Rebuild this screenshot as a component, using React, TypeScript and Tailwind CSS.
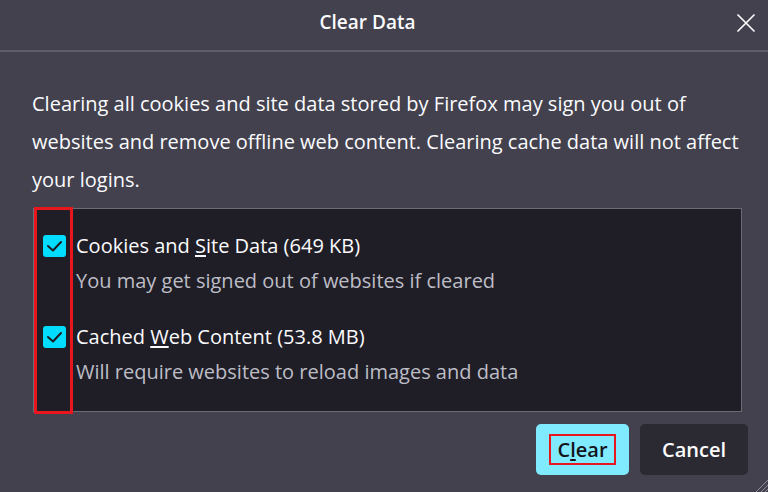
import React from "react";

function Check() {
  return (
    <div className="w-[23px] h-[22px] rounded-[3px] bg-[#00ddff] flex items-center justify-center shrink-0">
      <svg width="23" height="22" viewBox="0 0 23 22">
        <path d="M5 11 L10 15.5 L18 7" fill="none" stroke="#1c1b22" strokeWidth="2" strokeLinecap="round" strokeLinejoin="round" />
      </svg>
    </div>
  );
}

export default function App() {
  return (
    <div
      className="relative w-[768px] h-[492px] bg-[#42414d] overflow-hidden text-[#fbfbfe] flex flex-col"
      style={{ fontFamily: '"Open Sans", "Noto Sans", sans-serif' }}
    >
      <div className="h-[50px] flex items-start">
        <div className="w-[735px] pt-[9px] text-center text-[19px] leading-[26px] font-semibold">Clear Data</div>
        <button className="ml-[2px] mt-[14px] w-[18px] h-[18px]" aria-label="Close">
          <svg width="18" height="18" viewBox="0 0 18 18">
            <path d="M1 1 L17 17 M17 1 L1 17" stroke="#fbfbfe" strokeWidth="1.7" strokeLinecap="round" />
          </svg>
        </button>
      </div>
      <div className="h-[2px] bg-[#5e5d69]" />
      <p className="mt-[33px] ml-[32px] text-[20px] leading-[38px] whitespace-nowrap">
        Clearing all cookies and site data stored by Firefox may sign you out of
        <br />
        websites and remove offline web content. Clearing cache data will not affect
        <br />
        your logins.
      </p>
      <div className="relative mt-[9px] ml-[33px] w-[709px] h-[204px] border border-[#6b6a75] bg-[#1f1e26] pt-[26px] pl-[9px] flex flex-col gap-[34px]">
        <div className="flex gap-[10px]">
          <Check />
          <div className="flex flex-col gap-[13px]">
            <div className="text-[20px] leading-[22px]">
              Cookies and <span className="underline underline-offset-2">S</span>ite Data (649 KB)
            </div>
            <div className="text-[20px] leading-[22px] text-[#bdbdc6]">You may get signed out of websites if cleared</div>
          </div>
        </div>
        <div className="flex gap-[10px]">
          <Check />
          <div className="flex flex-col gap-[13px]">
            <div className="text-[20px] leading-[22px]">
              Cached <span className="underline underline-offset-2">W</span>eb Content (53.8 MB)
            </div>
            <div className="text-[20px] leading-[22px] text-[#bdbdc6]">Will require websites to reload images and data</div>
          </div>
        </div>
        <div className="absolute left-[0px] top-[-2px] w-[39px] h-[207px] border-[3px] border-[#e8161d]" />
      </div>
      <div className="mt-[12px] mr-[20px] flex justify-end gap-[11px]">
        <button className="relative w-[93px] h-[51px] rounded-[5px] bg-[#80ebff] text-[#15141a] text-[20px] font-semibold flex items-center justify-center">
          <span className="px-[6px] h-[31px] leading-[27px] border-2 border-[#e8161d]">
            C<span className="underline underline-offset-2">l</span>ear
          </span>
        </button>
        <button className="w-[108px] h-[51px] rounded-[5px] bg-[#2b2a33] text-[#fbfbfe] text-[20px] font-semibold flex items-center justify-center">
          Cancel
        </button>
      </div>
      <svg className="absolute right-0 bottom-0" width="14" height="14" viewBox="0 0 14 14">
        <path d="M14 2 L2 14 M14 7 L7 14 M14 11 L11 14" stroke="#8f8f9d" strokeWidth="1" />
      </svg>
    </div>
  );
}
